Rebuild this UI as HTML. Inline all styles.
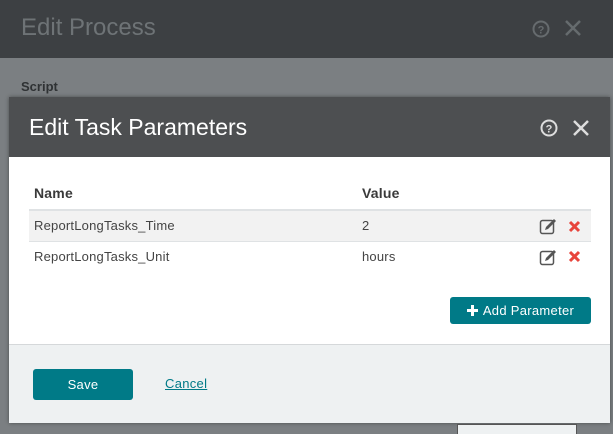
<!DOCTYPE html>
<html><head><meta charset="utf-8"><style>
*{box-sizing:border-box;margin:0;padding:0}
body{width:613px;height:429px;overflow:hidden;background:#7b7f82;font-family:"Liberation Sans",sans-serif;position:relative}
.top{position:absolute;left:0;top:0;width:613px;height:58px;background:#3d4043}
.top .t{position:absolute;left:21px;top:14px;font-size:24px;color:#6e7376}
.script{position:absolute;left:21px;top:79px;font-size:13px;font-weight:bold;color:#2f3234}
.modal{position:absolute;left:9px;top:97px;width:601px;height:326px;background:#fff;box-shadow:0 0 4px rgba(0,0,0,.4)}
.hd{height:60px;background:#4d4f51;position:relative}
.hd .t{position:absolute;left:20px;top:17px;font-size:23px;color:#fff}
.ft{position:absolute;left:0;top:247px;width:601px;height:79px;background:#eef1f2;border-top:1px solid #d5d8da}
table{position:absolute;left:20px;top:80px;width:562px;border-collapse:collapse;font-size:13px;color:#444;letter-spacing:0.2px}
th{text-align:left;font-weight:bold;height:33px;color:#3a3a3a;font-size:14px;padding-left:5px;vertical-align:middle}
td{height:31px;padding-left:5px;border-top:2px solid #dfe2e4}
tr.a td{background:#f2f2f2}
tr.b td{border-top:1px solid #dfe2e4}
.btn{position:absolute;background:#007a87;color:#fff;border-radius:3px;font-size:13px;text-align:center;letter-spacing:0.3px}
</style></head><body>
<div class="top"><div class="t">Edit Process</div>
<svg style="position:absolute;left:531px;top:19px" width="20" height="20" viewBox="0 0 20 20"><circle cx="10" cy="10" r="7.5" fill="none" stroke="#666b6e" stroke-width="2"/><text x="10" y="14.5" font-size="11" font-weight="bold" text-anchor="middle" fill="#666b6e" font-family="Liberation Sans">?</text></svg>
<svg style="position:absolute;left:563px;top:18px" width="20" height="20" viewBox="0 0 20 20"><path d="M3 3L17 17M17 3L3 17" stroke="#666b6e" stroke-width="2.5"/></svg>
</div>
<div class="script">Script</div>
<div class="modal">
<div class="hd"><div class="t">Edit Task Parameters</div>
<svg style="position:absolute;left:530px;top:21px" width="20" height="20" viewBox="0 0 20 20"><circle cx="10" cy="10" r="7.5" fill="none" stroke="#ddd" stroke-width="2"/><text x="10" y="14.5" font-size="11" font-weight="bold" text-anchor="middle" fill="#ddd" font-family="Liberation Sans">?</text></svg>
<svg style="position:absolute;left:562px;top:21px" width="20" height="20" viewBox="0 0 20 20"><path d="M3 3L17 17M17 3L3 17" stroke="#ddd" stroke-width="2.5"/></svg>
</div>
<table>
<tr><th style="width:328px">Name</th><th>Value</th><th></th></tr>
<tr class="a"><td>ReportLongTasks_Time</td><td>2</td><td style="width:60px"></td></tr>
<tr class="b"><td>ReportLongTasks_Unit</td><td>hours</td><td></td></tr>
</table>
<svg style="position:absolute;left:530px;top:120px" width="20" height="18" viewBox="0 0 20 18"><rect x="1.5" y="3.5" width="13" height="13" rx="2" fill="none" stroke="#555" stroke-width="1.5"/><path d="M6 13L7 10L15 2L17 4L9 12Z" fill="#555"/></svg>
<svg style="position:absolute;left:559px;top:123px" width="13" height="13" viewBox="0 0 13 13"><path d="M2 2L11 11M11 2L2 11" stroke="#e8453c" stroke-width="3"/></svg>
<svg style="position:absolute;left:530px;top:151px" width="20" height="18" viewBox="0 0 20 18"><rect x="1.5" y="3.5" width="13" height="13" rx="2" fill="none" stroke="#555" stroke-width="1.5"/><path d="M6 13L7 10L15 2L17 4L9 12Z" fill="#555"/></svg>
<svg style="position:absolute;left:559px;top:153px" width="13" height="13" viewBox="0 0 13 13"><path d="M2 2L11 11M11 2L2 11" stroke="#e8453c" stroke-width="3"/></svg>
<div class="btn" style="left:441px;top:200px;width:141px;height:27px;line-height:27px">
<svg width="11" height="11" viewBox="0 0 11 11" style="vertical-align:-1px;margin-right:5px"><path d="M5.5 0V11M0 5.5H11" stroke="#fff" stroke-width="3"/></svg>Add Parameter</div>
<div class="ft">
<div class="btn" style="left:24px;top:24px;width:100px;height:31px;line-height:31px">Save</div>
<div style="position:absolute;left:156px;top:31px;font-size:13px;color:#007a87;text-decoration:underline;letter-spacing:0.3px">Cancel</div>
</div>
</div>
<div style="position:absolute;left:457px;top:424px;width:120px;height:10px;border:1px solid #555;border-bottom:none;background:#eef1f2"></div>
</body></html>
